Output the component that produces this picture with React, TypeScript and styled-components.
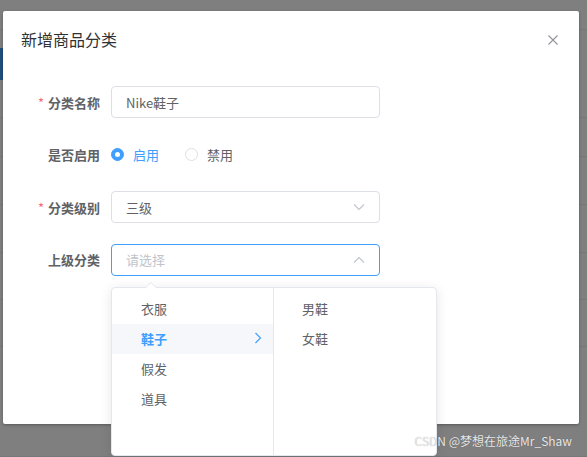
import styled, { createGlobalStyle } from 'styled-components'

const GlobalStyle = createGlobalStyle`
  html, body {
    margin: 0;
    padding: 0;
    background: #ffffff;
  }
  body {
    font-family: "Noto Sans CJK SC", "Liberation Sans", sans-serif;
  }
  * {
    box-sizing: border-box;
  }
`

const Screen = styled.div`
  position: relative;
  width: 587px;
  height: 457px;
  overflow: hidden;
  background: #ffffff;
`

// page that sits under the modal mask
const BgList = styled.div`
  display: flex;
  flex-direction: column;
`

const BgRow = styled.div<{ $h: number }>`
  height: ${(p) => p.$h}px;
  border-bottom: 1px solid #ebeef5;
  position: relative;
`

const BgButton = styled.div`
  margin-top: 18px;
  margin-left: -40px;
  width: 43px;
  height: 32px;
  background: #409eff;
`

const Mask = styled.div`
  position: absolute;
  inset: 0;
  background: rgba(0, 0, 0, 0.5);
`

const Dialog = styled.div`
  margin: 11px 0 0 3px;
  width: 576px;
  height: 413px;
  background: #ffffff;
  border-radius: 2px;
  box-shadow: 0 1px 3px rgba(0, 0, 0, 0.3);
`

const Header = styled.div`
  display: flex;
  justify-content: space-between;
  align-items: flex-start;
  padding: 16px 21px 0 18px;
`

const Title = styled.span`
  font-size: 16px;
  line-height: 24px;
  color: #303133;
`

const Close = styled.span`
  margin-top: 8px;
  display: flex;
`

const Form = styled.div`
  display: flex;
  flex-direction: column;
  gap: 20.5px;
  padding-top: 35px;
`

const Row = styled.div`
  display: flex;
  align-items: center;
  height: 32px;
`

const Label = styled.label`
  width: 108px;
  padding-right: 11px;
  text-align: right;
  font-size: 13px;
  font-weight: 700;
  color: #606266;
`

const Star = styled.span`
  color: #f56c6c;
  margin-right: 4px;
  font-weight: 400;
`

const Field = styled.div<{ $focus?: boolean }>`
  width: 269px;
  height: 32px;
  border: 1px solid ${(p) => (p.$focus ? '#409eff' : '#dcdfe6')};
  border-radius: 4px;
  display: flex;
  align-items: center;
  justify-content: space-between;
  padding: 0 14px 0 14px;
  font-size: 13px;
  color: #606266;
`

const Placeholder = styled.span`
  color: #c0c4cc;
`

const RadioItem = styled.div<{ $on?: boolean }>`
  display: flex;
  align-items: center;
  gap: 9px;
  margin-right: 26px;
  font-size: 13px;
  color: ${(p) => (p.$on ? '#409eff' : '#606266')};
`

const RadioDot = styled.span<{ $on?: boolean }>`
  width: 13px;
  height: 13px;
  border-radius: 50%;
  border: 1px solid ${(p) => (p.$on ? '#409eff' : '#dcdfe6')};
  background: ${(p) => (p.$on ? '#409eff' : '#ffffff')};
  display: flex;
  align-items: center;
  justify-content: center;
  &::after {
    content: '';
    width: 5px;
    height: 5px;
    border-radius: 50%;
    background: #ffffff;
    display: ${(p) => (p.$on ? 'block' : 'none')};
  }
`

const Popper = styled.div`
  position: absolute;
  left: 111px;
  top: 287px;
  width: 326px;
  height: 169px;
  background: #ffffff;
  border: 1px solid #e4e7ed;
  border-radius: 4px;
  box-shadow: 0 2px 12px rgba(0, 0, 0, 0.1);
  display: flex;
  &::before {
    content: '';
    position: absolute;
    top: -6px;
    left: 33px;
    width: 0;
    height: 0;
    border-left: 6px solid transparent;
    border-right: 6px solid transparent;
    border-bottom: 6px solid #e4e7ed;
  }
  &::after {
    content: '';
    position: absolute;
    top: -5px;
    left: 34px;
    width: 0;
    height: 0;
    border-left: 5px solid transparent;
    border-right: 5px solid transparent;
    border-bottom: 5px solid #ffffff;
  }
`

const Menu = styled.ul<{ $w: number; $last?: boolean }>`
  list-style: none;
  margin: 0;
  padding: 6px 0;
  width: ${(p) => p.$w}px;
  border-right: ${(p) => (p.$last ? 'none' : '1px solid #e4e7ed')};
`

const MenuItem = styled.li<{ $active?: boolean; $pad: number }>`
  height: 30px;
  display: flex;
  align-items: center;
  justify-content: space-between;
  padding: 0 11px 2px ${(p) => p.$pad}px;
  font-size: 13px;
  color: ${(p) => (p.$active ? '#409eff' : '#606266')};
  font-weight: ${(p) => (p.$active ? 700 : 400)};
  background: ${(p) => (p.$active ? '#f5f7fa' : 'transparent')};
`

const Watermark = styled.div`
  position: absolute;
  right: 15px;
  bottom: 8px;
  font-size: 12px;
  color: #e8e8e8;
  text-shadow: 0 0 1px rgba(0, 0, 0, 0.3);
`

const Chevron = ({ dir, color = '#c0c4cc' }: { dir: 'up' | 'down' | 'right'; color?: string }) => {
  const d = dir === 'down' ? 'M1 1.5 L6 6.5 L11 1.5' : dir === 'up' ? 'M1 6.5 L6 1.5 L11 6.5' : 'M1.5 1 L6.5 6 L1.5 11'
  const w = dir === 'right' ? 8 : 12
  const h = dir === 'right' ? 12 : 8
  return (
    <svg width={w} height={h} viewBox={`0 0 ${w} ${h}`} fill="none">
      <path d={d} stroke={color} strokeWidth="1.1" />
    </svg>
  )
}

const bgRows = [30, 88, 39, 48, 48, 47, 47, 110]
const firstLevel = ['衣服', '鞋子', '假发', '道具']
const secondLevel = ['男鞋', '女鞋']

const App = () => {
  return (
    <>
      <GlobalStyle />
      <Screen>
        <BgList>
          {bgRows.map((h, i) => (
            <BgRow key={i} $h={h}>
              {i === 1 && <BgButton />}
            </BgRow>
          ))}
        </BgList>

        <Mask>
          <Dialog>
            <Header>
              <Title>新增商品分类</Title>
              <Close>
                <svg width="10" height="10" viewBox="0 0 10 10">
                  <path d="M0.5 0.5 L9.5 9.5 M9.5 0.5 L0.5 9.5" stroke="#909399" strokeWidth="1.1" />
                </svg>
              </Close>
            </Header>

            <Form>
              <Row>
                <Label><Star>*</Star>分类名称</Label>
                <Field>Nike鞋子</Field>
              </Row>
              <Row>
                <Label>是否启用</Label>
                <RadioItem $on>
                  <RadioDot $on />
                  启用
                </RadioItem>
                <RadioItem>
                  <RadioDot />
                  禁用
                </RadioItem>
              </Row>
              <Row>
                <Label><Star>*</Star>分类级别</Label>
                <Field>
                  三级
                  <Chevron dir="down" />
                </Field>
              </Row>
              <Row>
                <Label>上级分类</Label>
                <Field $focus>
                  <Placeholder>请选择</Placeholder>
                  <Chevron dir="up" />
                </Field>
              </Row>
            </Form>
          </Dialog>
        </Mask>

        <Popper>
          <Menu $w={162}>
            {firstLevel.map((name) => (
              <MenuItem key={name} $pad={29} $active={name === '鞋子'}>
                {name}
                {name === '鞋子' && <Chevron dir="right" color="#409eff" />}
              </MenuItem>
            ))}
          </Menu>
          <Menu $w={162} $last>
            {secondLevel.map((name) => (
              <MenuItem key={name} $pad={28}>
                {name}
              </MenuItem>
            ))}
          </Menu>
        </Popper>

        <Watermark>CSDN @梦想在旅途Mr_Shaw</Watermark>
      </Screen>
    </>
  )
}

export default App
